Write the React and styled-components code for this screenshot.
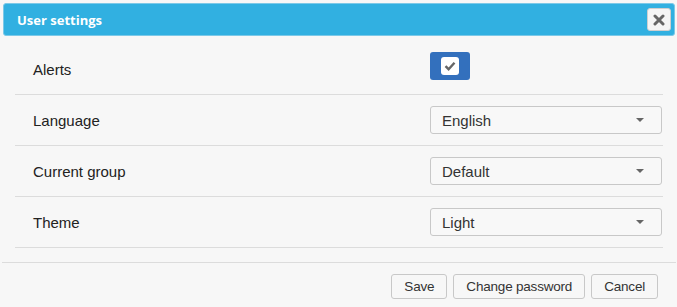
import React from "react";
import styled, { createGlobalStyle } from "styled-components";

const settings = [
  { label: "Language", value: "English" },
  { label: "Current group", value: "Default" },
  { label: "Theme", value: "Light" },
];

const App = () => {
  return (
    <>
      <GlobalStyle />
      <Dialog>
        <TitleBar>
          <Title>User settings</Title>
          <CloseButton aria-label="Close">
            <svg width="12" height="12" viewBox="0 0 12 12">
              <path d="M2 2 L10 10 M10 2 L2 10" stroke="#666" strokeWidth="3" strokeLinecap="round" />
            </svg>
          </CloseButton>
        </TitleBar>
        <Body>
          <Row>
            <Label>Alerts</Label>
            <ToggleButton>
              <CheckBox>
                <svg width="12" height="10" viewBox="0 0 12 10">
                  <path d="M1.5 5.2 L4.6 8.2 L10.5 1.8" fill="none" stroke="#666" strokeWidth="2.4" />
                </svg>
              </CheckBox>
            </ToggleButton>
          </Row>
          {settings.map((s) => (
            <Row key={s.label}>
              <Label>{s.label}</Label>
              <Select>
                <span>{s.value}</span>
                <Caret />
              </Select>
            </Row>
          ))}
        </Body>
        <Footer>
          <Button>Save</Button>
          <Button>Change password</Button>
          <Button>Cancel</Button>
        </Footer>
      </Dialog>
    </>
  );
};

export default App;

const GlobalStyle = createGlobalStyle`
  html, body {
    margin: 0;
    background: #f7f7f7;
  }
  body {
    font-family: "Liberation Sans", Arial, sans-serif;
    color: #222;
  }
`;

const Dialog = styled.div`
  width: 677px;
  height: 307px;
  box-sizing: border-box;
  padding-top: 3px;
  background: #f7f7f7;
  display: flex;
  flex-direction: column;
`;

const TitleBar = styled.div`
  margin: 0 2px 0 3px;
  height: 33px;
  box-sizing: border-box;
  background: #31b0e1;
  border: 1px solid #7cc9e8;
  border-radius: 3px;
  display: flex;
  align-items: center;
  justify-content: space-between;
  padding: 0 3px 0 13px;
`;

const Title = styled.h1`
  margin: 0;
  font-family: "Open Sans", "DejaVu Sans", sans-serif;
  font-size: 13px;
  font-weight: 700;
  color: #fff;
`;

const CloseButton = styled.button`
  width: 24px;
  height: 23px;
  padding: 0;
  background: #f5f5f5;
  border: 1px solid #cfcfcf;
  border-radius: 3px;
  display: flex;
  align-items: center;
  justify-content: center;
`;

const Body = styled.div`
  padding: 8px 14px 0 15px;
`;

const Row = styled.div`
  height: 51px;
  box-sizing: border-box;
  border-bottom: 1px solid #dcdcdc;
  display: grid;
  grid-template-columns: 1fr 232px;
  align-items: center;
  padding: 0 1px 0 18px;
`;

const Label = styled.span`
  font-size: 15px;
  color: #222;
`;

const ToggleButton = styled.div`
  width: 40px;
  height: 28px;
  margin-top: -6px;
  background: #3370bd;
  border-radius: 3px;
  display: flex;
  align-items: center;
  justify-content: center;
`;

const CheckBox = styled.div`
  width: 18px;
  height: 18px;
  background: #fff;
  border-radius: 3px;
  display: flex;
  align-items: center;
  justify-content: center;
`;

const Select = styled.div`
  height: 28px;
  box-sizing: border-box;
  border: 1px solid #c8c8c8;
  border-radius: 3px;
  background: #f8f8f8;
  display: flex;
  align-items: center;
  justify-content: space-between;
  padding: 0 17px 0 11px;
  font-size: 15px;
  color: #333;
`;

const Caret = styled.span`
  width: 0;
  height: 0;
  border-left: 4px solid transparent;
  border-right: 4px solid transparent;
  border-top: 4px solid #666;
`;

const Footer = styled.div`
  margin: 14px 1px 0 2px;
  border-top: 1px solid #dcdcdc;
  display: flex;
  justify-content: flex-end;
  gap: 6px;
  padding: 11px 18px 0 0;
`;

const Button = styled.button`
  height: 25px;
  padding: 0 12px;
  background: #f7f7f7;
  border: 1px solid #c8c8c8;
  border-radius: 3px;
  font-family: "Liberation Sans", Arial, sans-serif;
  font-size: 13.5px;
  letter-spacing: -0.2px;
  color: #333;
`;
